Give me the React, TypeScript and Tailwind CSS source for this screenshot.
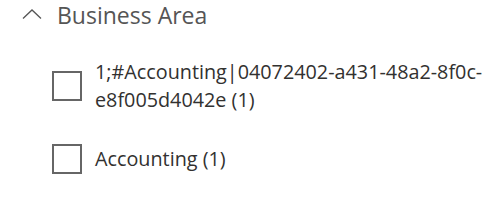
import { useState } from "react";

type Option = { id: string; label: string; count: number };

const options: Option[] = [
  { id: "acc-guid", label: "1;#Accounting|04072402-a431-48a2-8f0c-e8f005d4042e", count: 1 },
  { id: "acc", label: "Accounting", count: 1 },
];

export default function App() {
  const [checked, setChecked] = useState<Record<string, boolean>>({});

  return (
    <div
      className="h-[208px] w-[503px] overflow-hidden bg-white text-[#323130]"
      style={{ fontFamily: '"Open Sans", "Noto Sans", sans-serif' }}
    >
      <div className="flex h-[30px] items-center pl-[22px]">
        <svg width="20" height="10" viewBox="0 0 20 10" className="mt-[-2px]">
          <path d="M1 9.5 L10 1 L19 9.5" fill="none" stroke="#555" strokeWidth="1.3" />
        </svg>
        <span className="ml-[15px] text-[23px] leading-none text-[#555]">Business Area</span>
      </div>

      <ul className="mt-[28px] flex flex-col gap-[30px] pl-[52px]">
        {options.map((o) => (
          <li key={o.id} className="flex items-center">
            <button
              type="button"
              onClick={() => setChecked((c) => ({ ...c, [o.id]: !c[o.id] }))}
              className="h-[30px] w-[30px] shrink-0 border-[2.5px] border-[#666] bg-white"
              aria-pressed={!!checked[o.id]}
            />
            <span className="ml-[13px] w-[400px] text-[19.8px] leading-[28px]">
              {`${o.label} (${o.count})`}
            </span>
          </li>
        ))}
      </ul>
    </div>
  );
}
